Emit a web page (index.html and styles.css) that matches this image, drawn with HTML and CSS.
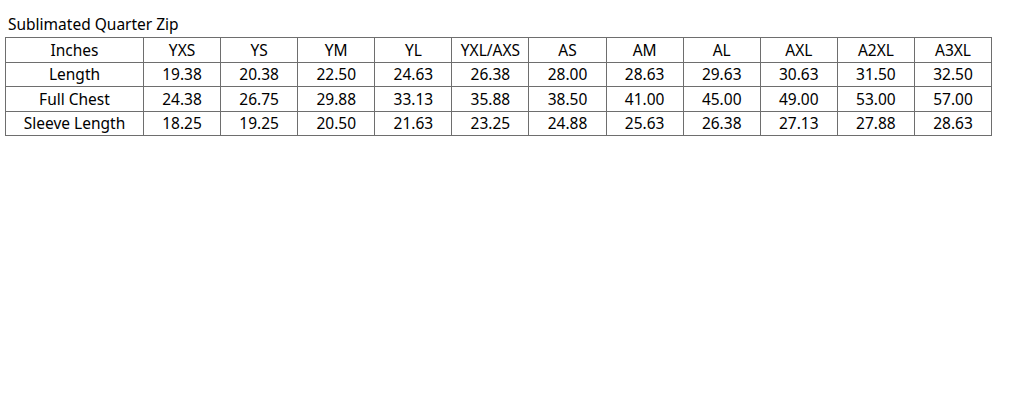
FILE: index.html
```html
<!DOCTYPE html>
<html>
<head>
<meta charset="utf-8">
<link rel="stylesheet" href="styles.css">
</head>
<body>
<div class="title">Sublimated Quarter Zip</div>
<table class="chart">
<colgroup><col class="c-first"><col span="11" class="c-size"></colgroup>
<tr><td>Inches</td><td>YXS</td><td>YS</td><td>YM</td><td>YL</td><td>YXL/AXS</td><td>AS</td><td>AM</td><td>AL</td><td>AXL</td><td>A2XL</td><td>A3XL</td></tr>
<tr><td>Length</td><td>19.38</td><td>20.38</td><td>22.50</td><td>24.63</td><td>26.38</td><td>28.00</td><td>28.63</td><td>29.63</td><td>30.63</td><td>31.50</td><td>32.50</td></tr>
<tr><td>Full Chest</td><td>24.38</td><td>26.75</td><td>29.88</td><td>33.13</td><td>35.88</td><td>38.50</td><td>41.00</td><td>45.00</td><td>49.00</td><td>53.00</td><td>57.00</td></tr>
<tr><td>Sleeve Length</td><td>18.25</td><td>19.25</td><td>20.50</td><td>21.63</td><td>23.25</td><td>24.88</td><td>25.63</td><td>26.38</td><td>27.13</td><td>27.88</td><td>28.63</td></tr>
</table>
</body>
</html>
```
FILE: styles.css
```css
html, body {
  margin: 0;
  padding: 0;
  background: #ffffff;
}
body {
  font-family: "Noto Sans", "Open Sans", sans-serif;
  font-size: 15.5px;
  color: #000000;
}
.title {
  height: 37px;
  box-sizing: border-box;
  padding: 14px 0 0 8px;
  line-height: 20px;
}
.chart {
  margin-left: 5px;
  border-collapse: collapse;
  table-layout: fixed;
  width: 987px;
}
.c-first { width: 138px; }
.c-size { width: 77.1px; }
.chart td {
  border: 1px solid #6e6e6e;
  height: 23.5px;
  padding: 0;
  text-align: center;
  line-height: 20px;
  white-space: nowrap;
}
```
